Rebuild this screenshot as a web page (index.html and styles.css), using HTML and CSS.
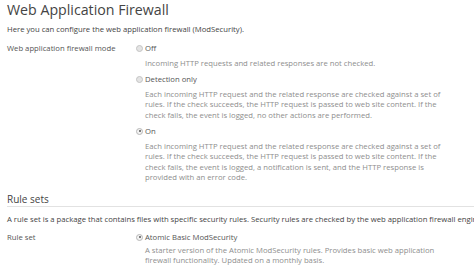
FILE: index.html
```html
<!DOCTYPE html>
<html>
<head>
<meta charset="utf-8">
<link rel="stylesheet" href="styles.css">
</head>
<body>
<div class="page">
  <h1 class="title">Web Application Firewall</h1>
  <p class="intro">Here you can configure the web application firewall (ModSecurity).</p>

  <div class="field">
    <div class="label">Web application firewall mode</div>
    <div class="options">
      <div class="option">
        <div class="opt-head"><span class="radio"></span><span class="opt-name">Off</span></div>
        <div class="opt-desc">Incoming HTTP requests and related responses are not checked.</div>
      </div>
      <div class="option">
        <div class="opt-head"><span class="radio"></span><span class="opt-name">Detection only</span></div>
        <div class="opt-desc">Each incoming HTTP request and the related response are checked against a set of rules. If the check succeeds, the HTTP request is passed to web site content. If the check fails, the event is logged, no other actions are performed.</div>
      </div>
      <div class="option">
        <div class="opt-head"><span class="radio checked"></span><span class="opt-name">On</span></div>
        <div class="opt-desc">Each incoming HTTP request and the related response are checked against a set of rules. If the check succeeds, the HTTP request is passed to web site content. If the check fails, the event is logged, a notification is sent, and the HTTP response is provided with an error code.</div>
      </div>
    </div>
  </div>

  <h2 class="section">Rule sets</h2>
  <p class="section-intro">A rule set is a package that contains files with specific security rules. Security rules are checked by the web application firewall engine.</p>

  <div class="field field-rules">
    <div class="label">Rule set</div>
    <div class="options">
      <div class="option">
        <div class="opt-head"><span class="radio checked"></span><span class="opt-name">Atomic Basic ModSecurity</span></div>
        <div class="opt-desc">A starter version of the Atomic ModSecurity rules. Provides basic web application firewall functionality. Updated on a monthly basis.</div>
      </div>
    </div>
  </div>
</div>
</body>
</html>
```

FILE: styles.css
```css
html, body {
  margin: 0;
  padding: 0;
  background: #ffffff;
  overflow: hidden;
}
body {
  font-family: "Open Sans", "Liberation Sans", sans-serif;
  color: #444;
}
.page {
  padding: 0 0 0 7px;
  width: 467px;
}
.title {
  margin: 0;
  font-size: 14.2px;
  font-weight: 400;
  line-height: 20px;
  color: #444;
}
.intro {
  margin: 3.75px 0 0 0;
  font-size: 7.7px;
  line-height: 10.5px;
  color: #444;
}
.field {
  display: flex;
  margin-top: 8.5px;
}
.label {
  width: 129px;
  flex: none;
  font-size: 7.7px;
  line-height: 10.5px;
  color: #555;
}
.options {
  flex: 1;
  display: flex;
  flex-direction: column;
  gap: 5.5px;
}
.opt-head {
  display: flex;
  align-items: center;
  height: 10.5px;
}
.radio {
  flex: none;
  width: 7px;
  height: 7px;
  border-radius: 50%;
  border: 1px solid #c4c4c4;
  background: #e4e4e4;
  box-sizing: border-box;
  margin-right: 2px;
  position: relative;
}
.radio.checked {
  background: #f2f2f2;
  border-color: #b8b8b8;
}
.radio.checked::after {
  content: "";
  position: absolute;
  left: 1.5px;
  top: 1.5px;
  width: 2px;
  height: 2px;
  border-radius: 50%;
  background: #555;
}
.opt-name {
  font-size: 7.7px;
  line-height: 10.5px;
  color: #555;
}
.opt-desc {
  margin-top: 4.5px;
  margin-left: 9px;
  width: 302px;
  font-size: 7.7px;
  line-height: 10.5px;
  color: #8e8e8e;
}
.section {
  margin: 10.5px 0 0 0;
  font-size: 10px;
  font-weight: 400;
  line-height: 12px;
  color: #444;
  border-bottom: 1px solid #e2e2e2;
  padding-bottom: 1px;
}
.section-intro {
  margin: 6.5px 0 0 0;
  font-size: 7.7px;
  line-height: 10.5px;
  white-space: nowrap;
  color: #444;
}
.field-rules {
  margin-top: 7.5px;
}
.field-rules .opt-desc {
  margin-top: 2.5px;
}
```
